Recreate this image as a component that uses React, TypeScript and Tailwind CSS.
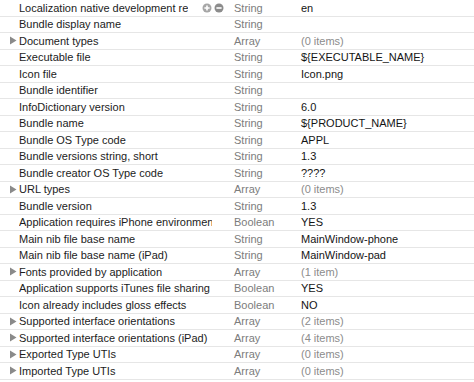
import React from 'react';

type Row = {
  key: string;
  type: string;
  value?: string;
  group?: boolean;
  controls?: boolean;
};

const ROWS: Row[] = [
  { key: 'Localization native development region', type: 'String', value: 'en', controls: true },
  { key: 'Bundle display name', type: 'String' },
  { key: 'Document types', type: 'Array', value: '(0 items)', group: true },
  { key: 'Executable file', type: 'String', value: '${EXECUTABLE_NAME}' },
  { key: 'Icon file', type: 'String', value: 'Icon.png' },
  { key: 'Bundle identifier', type: 'String' },
  { key: 'InfoDictionary version', type: 'String', value: '6.0' },
  { key: 'Bundle name', type: 'String', value: '${PRODUCT_NAME}' },
  { key: 'Bundle OS Type code', type: 'String', value: 'APPL' },
  { key: 'Bundle versions string, short', type: 'String', value: '1.3' },
  { key: 'Bundle creator OS Type code', type: 'String', value: '????' },
  { key: 'URL types', type: 'Array', value: '(0 items)', group: true },
  { key: 'Bundle version', type: 'String', value: '1.3' },
  { key: 'Application requires iPhone environment', type: 'Boolean', value: 'YES' },
  { key: 'Main nib file base name', type: 'String', value: 'MainWindow-phone' },
  { key: 'Main nib file base name (iPad)', type: 'String', value: 'MainWindow-pad' },
  { key: 'Fonts provided by application', type: 'Array', value: '(1 item)', group: true },
  { key: 'Application supports iTunes file sharing', type: 'Boolean', value: 'YES' },
  { key: 'Icon already includes gloss effects', type: 'Boolean', value: 'NO' },
  { key: 'Supported interface orientations', type: 'Array', value: '(2 items)', group: true },
  { key: 'Supported interface orientations (iPad)', type: 'Array', value: '(4 items)', group: true },
  { key: 'Exported Type UTIs', type: 'Array', value: '(0 items)', group: true },
  { key: 'Imported Type UTIs', type: 'Array', value: '(0 items)', group: true },
];

function Disclosure() {
  return (
    <svg width="8" height="9" viewBox="0 0 8 9" className="shrink-0">
      <path d="M1 0.5 L7.5 4.5 L1 8.5 Z" fill="#8a8a8a" />
    </svg>
  );
}

function Controls() {
  return (
    <div className="flex items-center gap-[2px]">
      <svg width="10" height="10" viewBox="0 0 10 10">
        <circle cx="5" cy="5" r="4.5" fill="#a6a6a6" />
        <path d="M5 2.4 V7.6 M2.4 5 H7.6" stroke="#fff" strokeWidth="1.6" />
      </svg>
      <svg width="10" height="10" viewBox="0 0 10 10">
        <circle cx="5" cy="5" r="4.5" fill="#8c8c8c" />
        <path d="M2.4 5 H7.6" stroke="#fff" strokeWidth="1.6" />
      </svg>
    </div>
  );
}

export default function App() {
  return (
    <div
      className="h-[382px] w-[474px] overflow-hidden bg-white text-[11px] text-[#1c1c1c]"
      style={{ fontFamily: '"Liberation Sans", Arial, sans-serif' }}
    >
      {ROWS.map((row) => {
        const isCount = row.value?.startsWith('(');
        return (
          <div
            key={row.key}
            className="flex h-[16.5px] items-center border-b border-[#e6e6e6] leading-[16px]"
          >
            <div className="flex w-[9px] shrink-0" />
            <div className="flex w-[10px] shrink-0 items-center">{row.group && <Disclosure />}</div>
            {row.controls ? (
              <>
                <div className="w-[169px] shrink-0 overflow-hidden whitespace-nowrap">{row.key}</div>
                <div className="flex w-[46px] shrink-0 pl-[14px]">
                  <Controls />
                </div>
              </>
            ) : (
              <>
                <div className="w-[193px] shrink-0 overflow-hidden whitespace-nowrap">{row.key}</div>
                <div className="w-[22px] shrink-0" />
              </>
            )}
            <div className="w-[67px] shrink-0 whitespace-nowrap text-[#7c7c7c]">{row.type}</div>
            <div className={`whitespace-nowrap ${isCount ? 'text-[#8c8c8c]' : 'text-[#141414]'}`}>
              {row.value}
            </div>
          </div>
        );
      })}
    </div>
  );
}
